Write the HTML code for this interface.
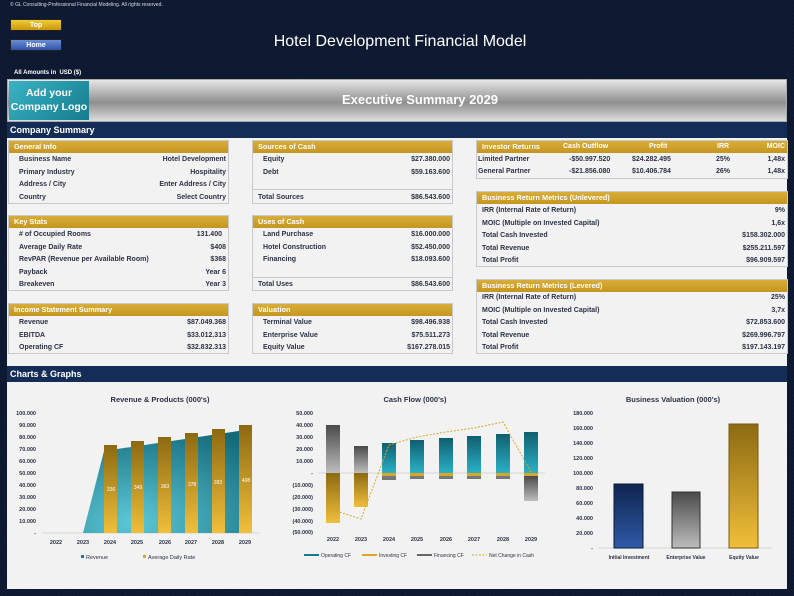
<!DOCTYPE html>
<html><head><meta charset="utf-8"><style>
*{margin:0;padding:0;box-sizing:border-box}
body{width:794px;height:596px;overflow:hidden;background:#0c1730;font-family:"Liberation Sans",sans-serif;position:relative;
background-image:repeating-linear-gradient(45deg,rgba(255,255,255,0.025) 0 1px,transparent 1px 3px);}
.a{position:absolute}
.btn{position:absolute;left:10px;width:52px;height:12px;font-size:7px;font-weight:bold;color:#fff;text-align:center;line-height:12px;border:1px solid #222}
.box{position:absolute;background:#f2f2f2;border:1px solid #c9c9c9}
.hd{position:absolute;left:0;right:0;top:0;height:12px;background:linear-gradient(#d9ad3a,#c5961f);color:#fff;font-size:7.3px;font-weight:bold;line-height:12px;padding-left:5px}
.r{position:absolute;left:10px;right:2px;font-size:7px;font-weight:bold;color:#2c3244;height:10px;line-height:10px}
.r span{float:right}
.ln{position:absolute;left:0;right:0;border-top:1px solid #c9c9c9}
.bar{position:absolute;left:7px;width:780px;height:16px;background:#142d57;color:#fff;font-size:9px;font-weight:bold;line-height:16px;padding-left:3px}
.ir{position:absolute;font-size:7px;font-weight:bold;color:#2c3244}
</style></head><body>
<div class="a" style="left:10px;top:2px;font-size:5px;color:#ddd">© GL Consulting-Professional Financial Modeling. All rights reserved.</div>
<div class="btn" style="top:19px;background:linear-gradient(#f2cc35,#c8960e)">Top</div>
<div class="btn" style="top:39px;background:linear-gradient(#6a8fd8,#2f54a6)">Home</div>
<div class="a" style="left:0;width:794px;top:33px;text-align:center;font-size:16px;color:#fff;padding-left:6px">Hotel Development Financial Model</div>
<div class="a" style="left:14px;top:70px;font-size:6px;font-weight:bold;color:#fff">All Amounts in &nbsp;USD ($)</div>

<div class="a" style="left:7px;top:79px;width:780px;height:43px;background:linear-gradient(#e6e6e6,#8f8f8f 55%,#dcdcdc);border:1px solid #aaa"></div>
<div class="a" style="left:9px;top:81px;width:80px;height:39px;background:linear-gradient(135deg,#39b3c4,#157c8e);color:#fff;font-size:10.5px;font-weight:bold;text-align:center;line-height:14px;padding-top:5px">Add your<br>Company Logo</div>
<div class="a" style="left:90px;width:660px;top:92px;text-align:center;font-size:13px;font-weight:bold;color:#fff">Executive Summary 2029</div>

<div class="bar" style="top:122px">Company Summary</div>
<div class="a" style="left:7px;top:138px;width:780px;height:228px;background:#f2f2f2"></div>

<div class="box" style="left:8px;top:140px;width:221px;height:64px"><div class="hd">General Info</div>
<div class="r" style="top:14px">Business Name<span>Hotel Development</span></div>
<div class="r" style="top:27px">Primary Industry<span>Hospitality</span></div>
<div class="r" style="top:39px">Address / City<span>Enter Address / City</span></div>
<div class="r" style="top:52px">Country<span>Select Country</span></div></div>
<div class="box" style="left:8px;top:215px;width:221px;height:76px"><div class="hd">Key Stats</div>
<div class="r" style="top:14px">#&nbsp;of Occupied Rooms<span style="margin-right:4px">131.400</span></div>
<div class="r" style="top:27px">Average Daily Rate<span>$408</span></div>
<div class="r" style="top:39px">RevPAR (Revenue per Available Room)<span>$368</span></div>
<div class="r" style="top:52px">Payback<span>Year 6</span></div>
<div class="r" style="top:64px">Breakeven<span>Year 3</span></div></div>
<div class="box" style="left:8px;top:303px;width:221px;height:51px"><div class="hd">Income Statement Summary</div>
<div class="r" style="top:14px">Revenue<span>$87.049.368</span></div>
<div class="r" style="top:27px">EBITDA<span>$33.012.313</span></div>
<div class="r" style="top:39px">Operating CF<span>$32.832.313</span></div></div>

<div class="box" style="left:252px;top:140px;width:201px;height:64px"><div class="hd">Sources of Cash</div>
<div class="r" style="top:14px">Equity<span>$27.380.000</span></div>
<div class="r" style="top:27px">Debt<span>$59.163.600</span></div>
<div class="ln" style="top:48px"></div>
<div class="r" style="top:52px;left:5px">Total Sources<span>$86.543.600</span></div></div>
<div class="box" style="left:252px;top:215px;width:201px;height:76px"><div class="hd">Uses of Cash</div>
<div class="r" style="top:14px">Land Purchase<span>$16.000.000</span></div>
<div class="r" style="top:27px">Hotel Construction<span>$52.450.000</span></div>
<div class="r" style="top:39px">Financing<span>$18.093.600</span></div>
<div class="ln" style="top:61px"></div>
<div class="r" style="top:64px;left:5px">Total Uses<span>$86.543.600</span></div></div>
<div class="box" style="left:252px;top:303px;width:201px;height:51px"><div class="hd">Valuation</div>
<div class="r" style="top:14px">Terminal Value<span>$98.496.938</span></div>
<div class="r" style="top:27px">Enterprise Value<span>$75.511.273</span></div>
<div class="r" style="top:39px">Equity Value<span>$167.278.015</span></div></div>

<div class="box" style="left:476px;top:140px;width:312px;height:39px"><div class="hd">Investor Returns</div>
<div class="ir" style="left:86px;top:2px;color:#fff">Cash Outflow</div>
<div class="ir" style="left:172px;top:2px;color:#fff">Profit</div>
<div class="ir" style="left:240px;top:2px;color:#fff">IRR</div>
<div class="ir" style="right:2px;top:2px;color:#fff">MOIC</div>
<div class="ir" style="left:1px;top:15px">Limited Partner</div><div class="ir" style="left:92px;top:15px">-$50.997.520</div><div class="ir" style="left:155px;top:15px">$24.282.495</div><div class="ir" style="left:239px;top:15px">25%</div><div class="ir" style="right:2px;top:15px">1,48x</div>
<div class="ir" style="left:1px;top:27px">General Partner</div><div class="ir" style="left:92px;top:27px">-$21.856.080</div><div class="ir" style="left:155px;top:27px">$10.406.784</div><div class="ir" style="left:239px;top:27px">26%</div><div class="ir" style="right:2px;top:27px">1,48x</div></div>
<div class="box" style="left:476px;top:191px;width:312px;height:76px"><div class="hd">Business Return Metrics (Unlevered)</div>
<div class="r" style="top:14px;left:5px">IRR (Internal Rate of Return)<span>9%</span></div>
<div class="r" style="top:27px;left:5px">MOIC (Multiple on Invested Capital)<span>1,6x</span></div>
<div class="r" style="top:39px;left:5px">Total Cash Invested<span>$158.302.000</span></div>
<div class="r" style="top:52px;left:5px">Total Revenue<span>$255.211.597</span></div>
<div class="r" style="top:64px;left:5px">Total Profit<span>$96.909.597</span></div></div>
<div class="box" style="left:476px;top:279px;width:312px;height:75px"><div class="hd">Business Return Metrics (Levered)</div>
<div class="r" style="top:13px;left:5px">IRR (Internal Rate of Return)<span>25%</span></div>
<div class="r" style="top:26px;left:5px">MOIC (Multiple on Invested Capital)<span>3,7x</span></div>
<div class="r" style="top:38px;left:5px">Total Cash Invested<span>$72.853.600</span></div>
<div class="r" style="top:51px;left:5px">Total Revenue<span>$269.996.797</span></div>
<div class="r" style="top:63px;left:5px">Total Profit<span>$197.143.197</span></div></div>

<div class="bar" style="top:366px">Charts &amp; Graphs</div>
<div class="a" style="left:7px;top:382px;width:780px;height:207px;background:#f2f2f2"></div>

<svg class="a" style="left:0;top:0" width="794" height="596" font-family="Liberation Sans" font-weight="bold">
<defs>
<linearGradient id="gd" x1="0" y1="0" x2="0" y2="1"><stop offset="0" stop-color="#8c6a12"/><stop offset="1" stop-color="#f0bf3a"/></linearGradient>
<linearGradient id="tl" x1="0" y1="0" x2="0" y2="1"><stop offset="0" stop-color="#0f5f6f"/><stop offset="1" stop-color="#2bb1c6"/></linearGradient>
<radialGradient id="tlr" cx="0.3" cy="0.9" r="1"><stop offset="0" stop-color="#5cc8d6"/><stop offset="1" stop-color="#13697a"/></radialGradient>
<linearGradient id="gy" x1="0" y1="0" x2="0" y2="1"><stop offset="0" stop-color="#4a4a4a"/><stop offset="1" stop-color="#bdbdbd"/></linearGradient>
<linearGradient id="nv" x1="0" y1="0" x2="0" y2="1"><stop offset="0" stop-color="#0f2450"/><stop offset="1" stop-color="#2f5aa6"/></linearGradient>
</defs>
<g font-size="5.5" fill="#2c3244">
<text x="160" y="402" text-anchor="middle" font-size="7.5">Revenue &amp; Products (000's)</text>
<g text-anchor="end"><text x="36" y="415">100.000</text><text x="36" y="427">90.000</text><text x="36" y="439">80.000</text><text x="36" y="451">70.000</text><text x="36" y="463">60.000</text><text x="36" y="475">50.000</text><text x="36" y="487">40.000</text><text x="36" y="499">30.000</text><text x="36" y="511">20.000</text><text x="36" y="523">10.000</text><text x="36" y="535">-</text></g>
<line x1="42" y1="533" x2="260" y2="533" stroke="#ccc" stroke-width="0.7"/>
<path d="M83 533 L104 451 L252 429 L252 533 Z" fill="url(#tlr)"/>
<g fill="url(#gd)"><rect x="104" y="445" width="13" height="88"/><rect x="131" y="441" width="13" height="92"/><rect x="158" y="437" width="13" height="96"/><rect x="185" y="433" width="13" height="100"/><rect x="212" y="429" width="13" height="104"/><rect x="239" y="425" width="13" height="108"/></g>
<g fill="#fff" font-size="5" text-anchor="middle" font-weight="normal"><text x="111" y="491">336</text><text x="138" y="489">349</text><text x="165" y="488">363</text><text x="192" y="486">378</text><text x="218" y="484">393</text><text x="246" y="482">408</text></g>
<g text-anchor="middle"><text x="56" y="544">2022</text><text x="83" y="544">2023</text><text x="110" y="544">2024</text><text x="137" y="544">2025</text><text x="165" y="544">2026</text><text x="191" y="544">2027</text><text x="218" y="544">2028</text><text x="245" y="544">2029</text></g>
<rect x="81" y="555" width="3" height="3" fill="#167a8b"/><text x="86" y="559" font-weight="normal">Revenue</text>
<rect x="143" y="555" width="3" height="3" fill="#d8a82a"/><text x="148" y="559" font-weight="normal">Average Daily Rate</text>

<text x="415" y="402" text-anchor="middle" font-size="7.5">Cash Flow (000's)</text>
<g text-anchor="end"><text x="313" y="415">50.000</text><text x="313" y="427">40.000</text><text x="313" y="439">30.000</text><text x="313" y="451">20.000</text><text x="313" y="463">10.000</text><text x="313" y="475">-</text><text x="313" y="487">(10.000)</text><text x="313" y="499">(20.000)</text><text x="313" y="511">(30.000)</text><text x="313" y="523">(40.000)</text><text x="313" y="534">(50.000)</text></g>
<line x1="318" y1="473" x2="545" y2="473" stroke="#ccc" stroke-width="0.7"/>
<rect x="326" y="425" width="14" height="48" fill="url(#gy)"/><rect x="326" y="473" width="14" height="50" fill="url(#gd)"/>
<rect x="354" y="446" width="14" height="27" fill="url(#gy)"/><rect x="354" y="473" width="14" height="34" fill="url(#gd)"/>
<g fill="url(#tl)"><rect x="382" y="443" width="14" height="30"/><rect x="410" y="440" width="14" height="33"/><rect x="439" y="438" width="14" height="35"/><rect x="467" y="436" width="14" height="37"/><rect x="496" y="434" width="14" height="39"/><rect x="524" y="432" width="14" height="41"/></g>
<g fill="#d8a82a"><rect x="382" y="473" width="14" height="3"/><rect x="410" y="473" width="14" height="3"/><rect x="439" y="473" width="14" height="3"/><rect x="467" y="473" width="14" height="3"/><rect x="496" y="473" width="14" height="3"/><rect x="524" y="473" width="14" height="3"/></g>
<g fill="#777"><rect x="382" y="476" width="14" height="4"/><rect x="410" y="476" width="14" height="3"/><rect x="439" y="476" width="14" height="3"/><rect x="467" y="476" width="14" height="3"/><rect x="496" y="476" width="14" height="3"/></g>
<rect x="524" y="476" width="14" height="25" fill="url(#gy)"/>
<polyline points="333,510 361,519 389,445 417,437 446,432 474,428 503,422 531,472" fill="none" stroke="#d8a82a" stroke-width="1" stroke-dasharray="2,1.5"/>
<g text-anchor="middle"><text x="333" y="541">2022</text><text x="361" y="541">2023</text><text x="389" y="541">2024</text><text x="417" y="541">2025</text><text x="446" y="541">2026</text><text x="474" y="541">2027</text><text x="503" y="541">2028</text><text x="531" y="541">2029</text></g>
<g font-weight="normal" font-size="5"><rect x="304" y="554" width="15" height="2" fill="#167a8b"/><text x="321" y="557">Operating CF</text>
<rect x="362" y="554" width="15" height="2" fill="#d8a82a"/><text x="379" y="557">Investing CF</text>
<rect x="417" y="554" width="15" height="2" fill="#666"/><text x="434" y="557">Financing CF</text>
<line x1="472" y1="555" x2="487" y2="555" stroke="#d8a82a" stroke-dasharray="2,1.5"/><text x="489" y="557">Net Change in Cash</text></g>

<text x="673" y="402" text-anchor="middle" font-size="7.5">Business Valuation (000's)</text>
<g text-anchor="end"><text x="593" y="415">180.000</text><text x="593" y="430">160.000</text><text x="593" y="445">140.000</text><text x="593" y="460">120.000</text><text x="593" y="475">100.000</text><text x="593" y="490">80.000</text><text x="593" y="505">60.000</text><text x="593" y="520">40.000</text><text x="593" y="535">20.000</text><text x="593" y="550">-</text></g>
<line x1="598" y1="548" x2="772" y2="548" stroke="#ccc" stroke-width="0.7"/>
<rect x="614" y="484" width="29" height="64" fill="url(#nv)" stroke="#0b1a3a"/>
<rect x="672" y="492" width="28" height="56" fill="url(#gy)" stroke="#333"/>
<rect x="729" y="424" width="29" height="124" fill="url(#gd)" stroke="#7a5b0c"/>
<g text-anchor="middle" font-size="5"><text x="629" y="559">Initial Investment</text><text x="686" y="559">Enterprise Value</text><text x="744" y="559">Equity Value</text></g>
</g>
</svg>
</body></html>
